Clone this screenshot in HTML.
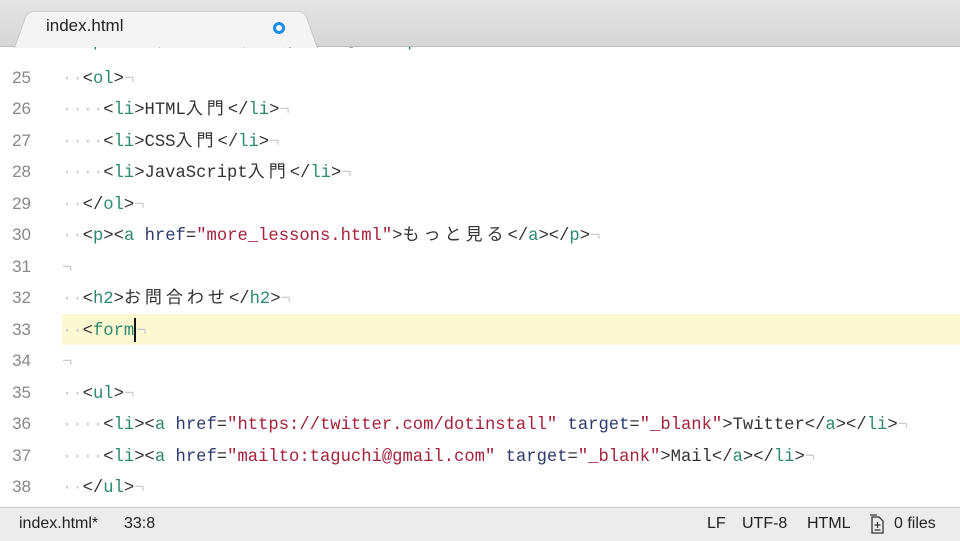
<!DOCTYPE html>
<html><head><meta charset="utf-8"><style>
body{margin:0;width:960px;height:540px;overflow:hidden;background:#fff;font-family:"Liberation Sans","Noto Sans CJK JP",sans-serif;position:relative}
.top{position:absolute;left:0;top:0;width:960px;height:46px;background:linear-gradient(#e4e4e4,#d6d6d6);border-bottom:1px solid #bdbdbd}
.tab{position:absolute;left:14px;top:7px;width:302px;height:40px;background:#f4f4f4;border:1px solid #c4c4c4;border-bottom:none;border-radius:8px 8px 0 0;transform:perspective(60px) rotateX(8deg);transform-origin:bottom}
.tabt{position:absolute;left:46px;top:16px;font-size:17px;color:#222}
.dot{position:absolute;left:273px;top:22px;width:6px;height:6px;border:3px solid #1a8ce8;border-radius:50%}
.ed{position:absolute;left:0;top:47px;width:960px;height:460px;overflow:hidden}
.ln{position:absolute;left:0;height:31.5px;width:960px;font-family:"Liberation Mono",monospace;font-size:17.2px;color:#333;white-space:pre}
.ln>span{position:absolute;top:0;height:31.5px;line-height:31.5px}
.n{left:0;width:31px;text-align:right;color:#888;font-family:"Liberation Sans",sans-serif;font-size:17px}
.c{left:62px;padding-top:2px;box-sizing:border-box}
.w{color:#ccc}
.t{color:#2d8a70}.a{color:#2c3a6e}.s{color:#a3223c}
.j{line-height:1;letter-spacing:4px;font-family:"Noto Sans CJK JP",sans-serif;font-size:17px}
.hl{background:#fbf8d2;}
.cur{display:inline-block;width:2px;height:24px;background:#111;vertical-align:middle}
.st{position:absolute;left:0;top:507px;width:960px;height:33px;background:#ececec;border-top:1px solid #c8c8c8;font-size:16px;color:#222;line-height:31px}
</style></head><body>
<div class="top"><div class="tab"></div><div class="tabt">index.html</div><div class="dot"></div></div>
<div class="ed">
<div class="ln" style="top:-22px"><span class="c"><span class="w">··</span>&lt;<span class="t">p</span>&gt;<span class="j">プログラミングを楽しく学ぶ</span>&lt;/<span class="t">p</span>&gt;</span></div>
<div class="ln" style="top:14.5px"><span class="n">25</span><span class="c"><span class="w">··</span>&lt;<span class="t">ol</span>&gt;<span class="w">¬</span></span></div>
<div class="ln" style="top:46px"><span class="n">26</span><span class="c"><span class="w">····</span>&lt;<span class="t">li</span>&gt;HTML<span class="j">入門</span>&lt;/<span class="t">li</span>&gt;<span class="w">¬</span></span></div>
<div class="ln" style="top:77.5px"><span class="n">27</span><span class="c"><span class="w">····</span>&lt;<span class="t">li</span>&gt;CSS<span class="j">入門</span>&lt;/<span class="t">li</span>&gt;<span class="w">¬</span></span></div>
<div class="ln" style="top:109px"><span class="n">28</span><span class="c"><span class="w">····</span>&lt;<span class="t">li</span>&gt;JavaScript<span class="j">入門</span>&lt;/<span class="t">li</span>&gt;<span class="w">¬</span></span></div>
<div class="ln" style="top:140.5px"><span class="n">29</span><span class="c"><span class="w">··</span>&lt;/<span class="t">ol</span>&gt;<span class="w">¬</span></span></div>
<div class="ln" style="top:172px"><span class="n">30</span><span class="c"><span class="w">··</span>&lt;<span class="t">p</span>&gt;&lt;<span class="t">a</span> <span class="a">href</span>=<span class="s">"more_lessons.html"</span>&gt;<span class="j">もっと見る</span>&lt;/<span class="t">a</span>&gt;&lt;/<span class="t">p</span>&gt;<span class="w">¬</span></span></div>
<div class="ln" style="top:203.5px"><span class="n">31</span><span class="c"><span class="w">¬</span></span></div>
<div class="ln" style="top:235px"><span class="n">32</span><span class="c"><span class="w">··</span>&lt;<span class="t">h2</span>&gt;<span class="j">お問合わせ</span>&lt;/<span class="t">h2</span>&gt;<span class="w">¬</span></span></div>
<div class="ln" style="top:266.5px"><span class="n">33</span><span class="c hl" style="width:898px"><span class="w">··</span>&lt;<span class="t">form</span><span class="cur"></span><span class="w">¬</span></span></div>
<div class="ln" style="top:298px"><span class="n">34</span><span class="c"><span class="w">¬</span></span></div>
<div class="ln" style="top:329.5px"><span class="n">35</span><span class="c"><span class="w">··</span>&lt;<span class="t">ul</span>&gt;<span class="w">¬</span></span></div>
<div class="ln" style="top:361px"><span class="n">36</span><span class="c"><span class="w">····</span>&lt;<span class="t">li</span>&gt;&lt;<span class="t">a</span> <span class="a">href</span>=<span class="s">"https://twitter.com/dotinstall"</span> <span class="a">target</span>=<span class="s">"_blank"</span>&gt;Twitter&lt;/<span class="t">a</span>&gt;&lt;/<span class="t">li</span>&gt;<span class="w">¬</span></span></div>
<div class="ln" style="top:392.5px"><span class="n">37</span><span class="c"><span class="w">····</span>&lt;<span class="t">li</span>&gt;&lt;<span class="t">a</span> <span class="a">href</span>=<span class="s">"mailto:taguchi@gmail.com"</span> <span class="a">target</span>=<span class="s">"_blank"</span>&gt;Mail&lt;/<span class="t">a</span>&gt;&lt;/<span class="t">li</span>&gt;<span class="w">¬</span></span></div>
<div class="ln" style="top:424px"><span class="n">38</span><span class="c"><span class="w">··</span>&lt;/<span class="t">ul</span>&gt;<span class="w">¬</span></span></div>
</div>
<div class="st"><span style="position:absolute;left:19px">index.html*</span><span style="position:absolute;left:124px">33:8</span>
<span style="position:absolute;left:707px">LF</span><span style="position:absolute;left:742px">UTF-8</span><span style="position:absolute;left:807px">HTML</span>
<svg style="position:absolute;left:869px;top:6px" width="16" height="20" viewBox="0 0 16 20"><path d="M3 3h7l4 4v12H3z" fill="none" stroke="#333" stroke-width="1.3"/><path d="M1 1h7" stroke="#333" stroke-width="1.2"/><path d="M8.5 8v6M5.5 11h6M5.5 16h6" stroke="#333" stroke-width="1.2"/></svg>
<span style="position:absolute;left:894px">0 files</span></div>
</body></html>
